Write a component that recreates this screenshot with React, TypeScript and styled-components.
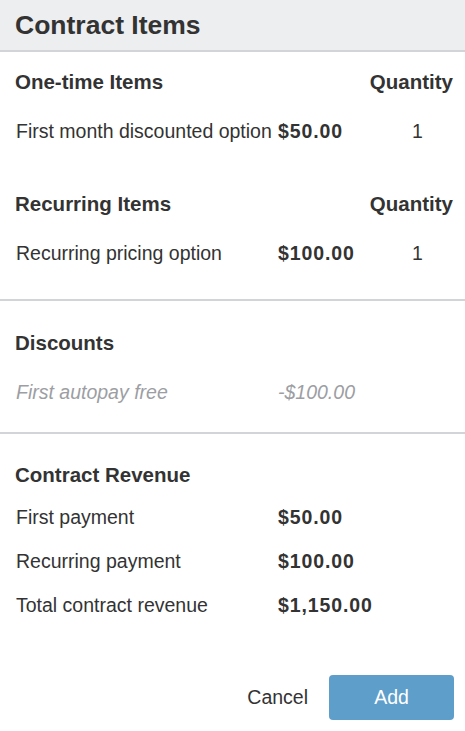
import styled, { createGlobalStyle } from "styled-components";

const GlobalStyle = createGlobalStyle`
  body {
    margin: 0;
    background: #ffffff;
    font-family: "Liberation Sans", Arial, sans-serif;
    color: #333333;
  }
`;

const Panel = styled.div`
  width: 465px;
  min-height: 731px;
  display: flex;
  flex-direction: column;
`;

const Header = styled.div`
  height: 52px;
  background-color: #edeef0;
  border-bottom: 2px solid #d3d4d8;
  box-sizing: border-box;
  padding-left: 15px;
  display: flex;
  align-items: center;
`;

const Title = styled.h1`
  margin: 0;
  font-size: 26.5px;
  font-weight: bold;
  color: #333333;
`;

const Section = styled.section<{ $top: number; $bottom: number; $divider?: boolean }>`
  padding: ${(p) => p.$top}px 12px ${(p) => p.$bottom}px 15px;
  border-bottom: ${(p) => (p.$divider ? "2px solid #d3d4d8" : "none")};
`;

const Group = styled.div`
  & + & {
    margin-top: 31px;
  }
`;

const HeadRow = styled.div<{ $tight?: boolean }>`
  display: flex;
  align-items: center;
  justify-content: space-between;
  height: 40px;
  margin-bottom: ${(p) => (p.$tight ? 0 : 7)}px;
`;

const Heading = styled.h2`
  margin: 0;
  font-size: 20.5px;
  font-weight: bold;
  color: #333333;
`;

const Row = styled.div<{ $muted?: boolean }>`
  display: grid;
  grid-template-columns: 262px 90px 1fr;
  align-items: center;
  height: 44px;
  padding-left: 1px;
  font-size: 19.5px;
  white-space: nowrap;
  color: ${(p) => (p.$muted ? "#9c9ea3" : "#333333")};
  font-style: ${(p) => (p.$muted ? "italic" : "normal")};
`;

const Price = styled.span<{ $bold?: boolean }>`
  font-weight: ${(p) => (p.$bold ? "bold" : "normal")};
  letter-spacing: ${(p) => (p.$bold ? "0.9px" : "0")};
`;

const Qty = styled.span`
  text-align: center;
  padding-left: 14px;
`;

const Footer = styled.div`
  display: flex;
  justify-content: flex-end;
  align-items: center;
  gap: 21px;
  padding: 48px 11px 0 0;
`;

const CancelButton = styled.button`
  background: none;
  border: none;
  font-family: inherit;
  font-size: 19.5px;
  color: #333333;
  padding: 0;
  cursor: pointer;
`;

const AddButton = styled.button`
  width: 125px;
  height: 45px;
  border: none;
  border-radius: 4px;
  background-color: #5e9ecb;
  color: #ffffff;
  font-family: inherit;
  font-size: 19.5px;
  cursor: pointer;
`;

type Item = { name: string; price: string; qty: number };

const itemGroups: { title: string; items: Item[] }[] = [
  {
    title: "One-time Items",
    items: [{ name: "First month discounted option", price: "$50.00", qty: 1 }],
  },
  {
    title: "Recurring Items",
    items: [{ name: "Recurring pricing option", price: "$100.00", qty: 1 }],
  },
];

const revenue = [
  { label: "First payment", value: "$50.00" },
  { label: "Recurring payment", value: "$100.00" },
  { label: "Total contract revenue", value: "$1,150.00" },
];

export default function App() {
  return (
    <Panel>
      <GlobalStyle />
      <Header>
        <Title>Contract Items</Title>
      </Header>

      <Section $top={10} $bottom={24} $divider>
        {itemGroups.map((group) => (
          <Group key={group.title}>
            <HeadRow>
              <Heading>{group.title}</Heading>
              <Heading>Quantity</Heading>
            </HeadRow>
            {group.items.map((item) => (
              <Row key={item.name}>
                <span>{item.name}</span>
                <Price $bold>{item.price}</Price>
                <Qty>{item.qty}</Qty>
              </Row>
            ))}
          </Group>
        ))}
      </Section>

      <Section $top={22} $bottom={18} $divider>
        <HeadRow>
          <Heading>Discounts</Heading>
        </HeadRow>
        <Row $muted>
          <span>First autopay free</span>
          <Price>-$100.00</Price>
        </Row>
      </Section>

      <Section $top={21} $bottom={0}>
        <HeadRow $tight>
          <Heading>Contract Revenue</Heading>
        </HeadRow>
        {revenue.map((r) => (
          <Row key={r.label}>
            <span>{r.label}</span>
            <Price $bold>{r.value}</Price>
          </Row>
        ))}
      </Section>

      <Footer>
        <CancelButton>Cancel</CancelButton>
        <AddButton>Add</AddButton>
      </Footer>
    </Panel>
  );
}
